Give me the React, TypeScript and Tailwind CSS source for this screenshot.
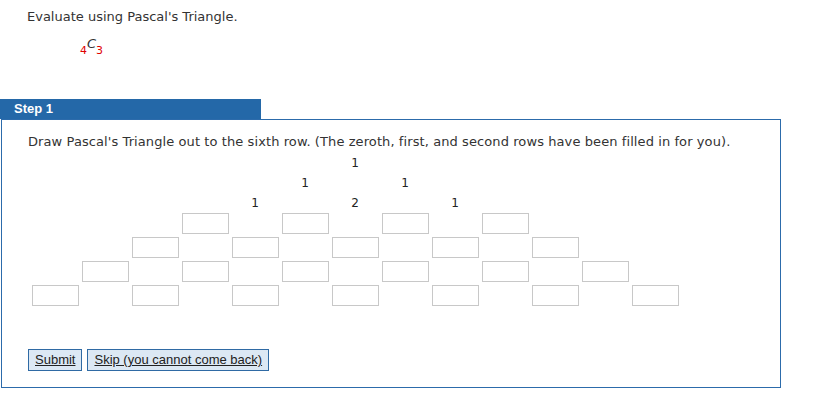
import React from "react";

const textRows: { col: number; value: string }[][] = [
  [{ col: 6, value: "1" }],
  [
    { col: 5, value: "1" },
    { col: 7, value: "1" },
  ],
  [
    { col: 4, value: "1" },
    { col: 6, value: "2" },
    { col: 8, value: "1" },
  ],
];

const inputRows: number[][] = [
  [3, 5, 7, 9],
  [2, 4, 6, 8, 10],
  [1, 3, 5, 7, 9, 11],
  [0, 2, 4, 6, 8, 10, 12],
];

const cols = Array.from({ length: 13 }, (_, i) => i);

export default function App() {
  return (
    <div className="w-[831px] h-[416px] bg-white font-['DejaVu_Sans',Verdana,sans-serif] text-[13px] text-[#333]">
      <div className="pl-[27px] pt-[9px] leading-[16px]">
        Evaluate using Pascal's Triangle.
      </div>

      <div className="pl-[80px] pt-[12px] h-[30px] leading-[16px] text-[13px]">
        <span className="relative top-[5px] text-[11px] text-[#e00000]">4</span>
        <span className="relative top-[-1px] italic">C</span>
        <span className="relative top-[5px] text-[11px] text-[#e00000]">3</span>
      </div>

      <div className="mt-[44px] w-[261px] h-[20px] bg-[#2468a8] pl-[14px] font-['Liberation_Sans',Arial,sans-serif] font-bold text-[13px] leading-[20px] text-white">
        Step 1
      </div>

      <div className="ml-[1px] w-[780px] h-[269px] border border-[#2c6bab] box-border">
        <div className="pl-[26px] pt-[14px] leading-[16px] tracking-[0.09px]">
          Draw Pascal's Triangle out to the sixth row. (The zeroth, first, and second rows have been filled in for you).
        </div>

        <div className="ml-[28px] mt-[3px] flex flex-col">
          {textRows.map((row, r) => (
            <div key={`t${r}`} className="grid grid-cols-[repeat(13,50px)] h-[20px] items-center">
              {cols.map((c) => {
                const item = row.find((x) => x.col === c);
                return (
                  <div key={c} className="text-center text-[12px] leading-[20px] text-[#222]">
                    {item ? item.value : ""}
                  </div>
                );
              })}
            </div>
          ))}
          <div className="flex flex-col gap-[3px]">
            {inputRows.map((row, r) => (
              <div key={`i${r}`} className="grid grid-cols-[repeat(13,50px)] h-[21px]">
                {cols.map((c) => (
                  <div key={c} className="flex justify-center">
                    {row.includes(c) ? (
                      <input
                        type="text"
                        className="w-[47px] h-[21px] border border-[#c8c8c8] bg-white outline-none"
                      />
                    ) : null}
                  </div>
                ))}
              </div>
            ))}
          </div>
        </div>

        <div className="ml-[26px] mt-[43px] flex gap-[5px] font-['Liberation_Sans',Arial,sans-serif] text-[13px] text-[#222]">
          <button
            type="button"
            className="h-[22px] px-[6px] border border-[#2f6aa4] bg-[#dce8f4] underline leading-[20px]"
          >
            Submit
          </button>
          <button
            type="button"
            className="h-[22px] px-[6px] border border-[#2f6aa4] bg-[#dce8f4] underline leading-[20px]"
          >
            Skip (you cannot come back)
          </button>
        </div>
      </div>
    </div>
  );
}
